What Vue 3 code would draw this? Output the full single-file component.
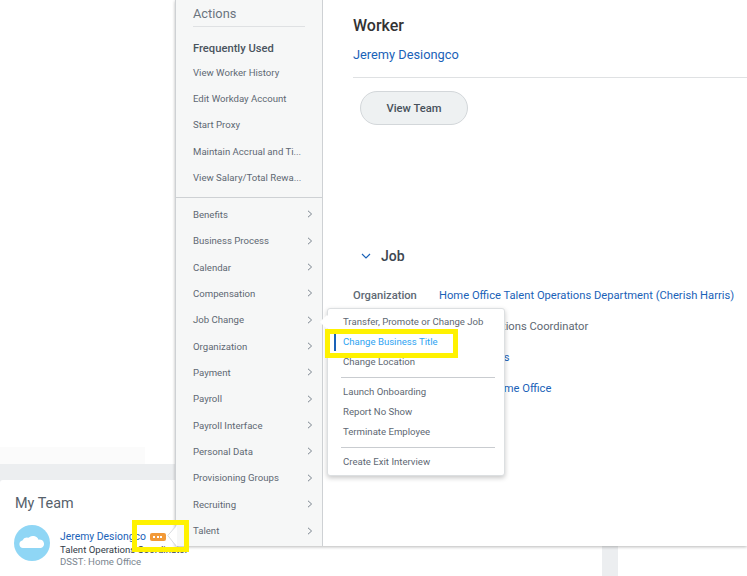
<template>
  <div class="page">
    <div class="dashboard">
      <div class="top-card"><div class="top-fade"></div></div>
      <div class="bottom-row">
        <section class="team-card">
          <h2>My Team</h2>
          <div class="person">
            <div class="avatar">
              <svg width="26" height="13" viewBox="0 0 26 13">
                <path fill="#fff" d="M4 13a3.800 3.800 0 0 1-.6-7.500A5 5 0 0 1 9.500 2.800 6 6 0 0 1 19.500 4.800 4.200 4.200 0 0 1 22 13z" />
              </svg>
            </div>
            <div class="person-text">
              <div class="person-name">
                <a href="#">Jeremy Desiongco</a>
                <span class="badge"><i></i><i></i><i></i></span>
              </div>
              <div class="person-title">Talent Operations Coordinator</div>
              <div class="person-org">DSST: Home Office</div>
            </div>
          </div>
        </section>
        <div class="side-card"></div>
      </div>
    </div>

    <div class="popup">
      <aside class="actions">
        <div class="actions-title">Actions</div>
        <div class="freq-title">Frequently Used</div>
        <div v-for="item in frequent" :key="item" class="action-row">{{ item }}</div>
        <div class="actions-divider"></div>
        <div v-for="item in groups" :key="item" class="action-row group-row">
          <span>{{ item }}</span>
          <svg width="6" height="8" viewBox="0 0 6 8">
            <path d="M1 .8 4.600 4 1 7.200" fill="none" stroke="#7b858f" stroke-width="1" />
          </svg>
        </div>
      </aside>

      <main class="worker">
        <h1>Worker</h1>
        <a class="worker-link" href="#">Jeremy Desiongco</a>
        <div class="worker-divider"></div>
        <button class="team-btn">View Team</button>

        <div class="job-head">
          <svg width="10" height="6" viewBox="0 0 10 6">
            <path d="M1 1l4 4 4-4" fill="none" stroke="#1a62b8" stroke-width="1.200" />
          </svg>
          <h3>Job</h3>
        </div>

        <div class="job-rows">
          <div v-for="row in jobRows" :key="row.value" class="job-row">
            <span class="job-label">{{ row.label }}</span>
            <a v-if="row.link" href="#">{{ row.value }}</a>
            <span v-else class="job-value">{{ row.value }}</span>
          </div>
        </div>
      </main>
    </div>

    <div class="menu">
      <span class="menu-arrow"></span>
      <template v-for="(group, g) in menuGroups" :key="g">
        <div v-if="g > 0" class="menu-sep"></div>
        <div
          v-for="item in group"
          :key="item"
          class="menu-item"
          :class="{ active: item === 'Change Business Title' }"
        >
          {{ item }}
        </div>
      </template>
    </div>

    <div class="callout callout-menu"></div>
    <div class="callout callout-badge">
      <svg class="callout-arrow" width="10" height="22" viewBox="0 0 10 22">
        <path d="M10 0.500 .8 10.500 10 21.500z" fill="#fff" />
        <path d="M9.500 0.500 .8 10.500 9.500 21.500" fill="none" stroke="#d8dbde" />
      </svg>
    </div>
  </div>
</template>

<script setup>
const frequent = [
  "View Worker History",
  "Edit Workday Account",
  "Start Proxy",
  "Maintain Accrual and Ti...",
  "View Salary/Total Rewa...",
];

const groups = [
  "Benefits",
  "Business Process",
  "Calendar",
  "Compensation",
  "Job Change",
  "Organization",
  "Payment",
  "Payroll",
  "Payroll Interface",
  "Personal Data",
  "Provisioning Groups",
  "Recruiting",
  "Talent",
];

// only the tail of the last three values shows past the menu
const jobRows = [
  { label: "Organization", value: "Home Office Talent Operations Department (Cherish Harris)", link: true },
  { label: "", value: "Talent Operations Coordinator", link: false },
  { label: "", value: "Team Leaders", link: true },
  { label: "", value: "DSST Inc: Home Office", link: true },
];

const menuGroups = [
  ["Transfer, Promote or Change Job", "Change Business Title", "Change Location"],
  ["Launch Onboarding", "Report No Show", "Terminate Employee"],
  ["Create Exit Interview"],
];
</script>

<style>
html,
body {
  margin: 0;
  background: #fff;
}
</style>

<style scoped>
.page {
  position: relative;
  width: 747px;
  height: 576px;
  overflow: hidden;
  background: #eceef0;
  font-family: Roboto, "Liberation Sans", sans-serif;
}

a {
  color: #1a62b8;
  text-decoration: none;
}

.dashboard {
  display: flex;
  flex-direction: column;
  height: 100%;
}

.top-card {
  height: 464px;
  display: flex;
  align-items: flex-end;
  background: #fff;
  border-radius: 0 0 4px 4px;
}

.top-fade {
  width: 145px;
  height: 17px;
  background: #fbfbfb;
}

.bottom-row {
  display: flex;
  gap: 16px;
  margin-top: 16px;
  flex: 1;
}

.team-card {
  width: 602px;
  padding: 15px 15px 0 14px;
  box-sizing: border-box;
  background: #fff;
  border-radius: 3px 3px 0 0;
}

.team-card h2 {
  margin: 0 0 12px 1px;
  font-size: 14.400px;
  line-height: 18px;
  font-weight: 400;
  color: #56616b;
}

.side-card {
  flex: 1;
  background: #fff;
}

.person {
  display: flex;
  gap: 10px;
}

.avatar {
  width: 36px;
  height: 36px;
  border-radius: 50%;
  background: #8fd6f5;
  display: flex;
  align-items: center;
  justify-content: center;
}

.avatar svg {
  margin-bottom: 3px;
}

.person-text {
  padding-top: 6px;
  font-size: 9.600px;
  line-height: 12.500px;
  white-space: nowrap;
}

.person-name {
  display: flex;
  align-items: center;
  gap: 4px;
  font-size: 10.400px;
}

.badge {
  width: 16px;
  height: 8px;
  border-radius: 2px;
  background: #f29a38;
  display: flex;
  align-items: center;
  justify-content: center;
  gap: 1.500px;
}

.badge i {
  width: 2px;
  height: 2px;
  background: #fff;
}

.person-title {
  color: #333d47;
}

.person-org {
  color: #7b858f;
}

.popup {
  position: absolute;
  left: 175px;
  top: 0;
  width: 572px;
  height: 546px;
  display: flex;
  background: #fff;
  box-shadow: 0 1px 3px rgba(0, 0, 0, 0.28);
}

.actions {
  width: 148px;
  box-sizing: border-box;
  padding-top: 6px;
  background: #f6f7f7;
  border-left: 1px solid #ced1d4;
  border-right: 1px solid #ced1d4;
  font-size: 9.600px;
  color: #5e6873;
}

.actions-title {
  margin: 0 17px 0;
  padding-bottom: 4px;
  font-size: 12.800px;
  line-height: 16px;
  color: #6a747e;
  border-bottom: 1px solid #dfe1e3;
}

.freq-title {
  margin: 15px 17px 3px;
  font-size: 11.200px;
  line-height: 14px;
  font-weight: 500;
  color: #4a545e;
}

.action-row {
  height: 26.350px;
  padding: 0 17px;
  display: flex;
  align-items: center;
  white-space: nowrap;
}

.actions-divider {
  height: 1px;
  margin: 6px 0 3.500px;
  background: #ced1d4;
}

.group-row {
  justify-content: space-between;
  padding-right: 9px;
}

.worker {
  flex: 1;
  padding: 17px 0 0 30px;
  color: #333d47;
}

.worker h1 {
  margin: 0;
  font-size: 16px;
  line-height: 18px;
  font-weight: 500;
  color: #333;
}

.worker-link {
  display: block;
  margin-top: 11px;
  font-size: 12.800px;
  line-height: 18px;
}

.worker-divider {
  height: 1px;
  margin-top: 13px;
  background: #dfe1e3;
}

.team-btn {
  display: block;
  width: 108px;
  height: 34px;
  margin: 13px 0 0 7px;
  border: 1px solid #d3d7da;
  border-radius: 17px;
  background: #eef1f2;
  font-family: inherit;
  font-size: 11.200px;
  font-weight: 500;
  color: #47515b;
}

.job-head {
  display: flex;
  align-items: center;
  gap: 10px;
  margin: 122px 0 0 8px;
}

.job-head h3 {
  margin: 0;
  font-size: 14px;
  line-height: 18px;
  font-weight: 500;
  color: #3d4650;
}

.job-rows {
  margin-top: 14.500px;
}

.job-row {
  display: flex;
  align-items: center;
  height: 31px;
  font-size: 11.200px;
  white-space: nowrap;
}

.job-label {
  width: 86px;
  font-weight: 500;
  color: #5e6873;
}

.job-value {
  color: #5e6873;
}

.menu {
  position: absolute;
  left: 327px;
  top: 308px;
  width: 178px;
  box-sizing: border-box;
  padding: 3px 0 3px;
  background: #fff;
  border: 1px solid #dcdfe1;
  border-radius: 3px;
  box-shadow: 0 2px 5px rgba(0, 0, 0, 0.22);
  font-size: 9.600px;
  color: #5e6873;
}

.menu-arrow {
  position: absolute;
  left: -6px;
  top: 8px;
  width: 10px;
  height: 10px;
  background: #fff;
  transform: rotate(45deg);
}

.menu-item {
  position: relative;
  height: 20px;
  line-height: 20px;
  padding-left: 15px;
  white-space: nowrap;
}

.menu-item.active {
  color: #2ea3f2;
}

.menu-item.active::before {
  content: "";
  position: absolute;
  left: 6px;
  top: 1px;
  width: 2px;
  height: 18px;
  background: #1a62b8;
}

.menu-sep {
  height: 1px;
  margin: 5px 9px 4px 13px;
  background: #c9ccd0;
}

.callout {
  position: absolute;
  box-sizing: border-box;
  border: 5px solid #fff200;
}

.callout-menu {
  left: 325px;
  top: 329px;
  width: 133px;
  height: 29px;
}

.callout-badge {
  left: 132px;
  top: 520px;
  width: 57px;
  height: 32px;
}

.callout-arrow {
  position: absolute;
  left: 30px;
  top: 0;
}
</style>
